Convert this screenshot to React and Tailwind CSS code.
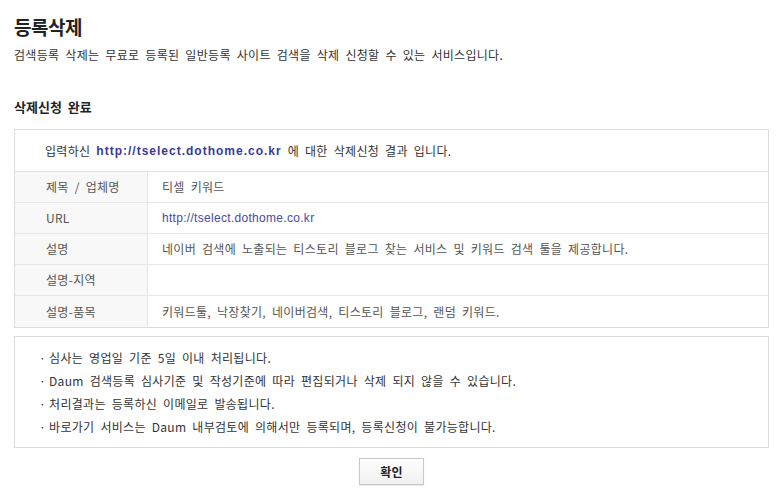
const rows = [
  { label: "제목 / 업체명", value: "티셀 키워드" },
  { label: "URL", value: "http://tselect.dothome.co.kr", link: true },
  { label: "설명", value: "네이버 검색에 노출되는 티스토리 블로그 찾는 서비스 및 키워드 검색 툴을 제공합니다." },
  { label: "설명-지역", value: "" },
  { label: "설명-품목", value: "키워드툴, 낙장찾기, 네이버검색, 티스토리 블로그, 랜덤 키워드." },
];

const notices = [
  "심사는 영업일 기준 5일 이내 처리됩니다.",
  "Daum 검색등록 심사기준 및 작성기준에 따라 편집되거나 삭제 되지 않을 수 있습니다.",
  "처리결과는 등록하신 이메일로 발송됩니다.",
  "바로가기 서비스는 Daum 내부검토에 의해서만 등록되며, 등록신청이 불가능합니다.",
];

export default function App() {
  return (
    <div
      className="min-h-screen bg-white px-[14px] pt-[14px] text-[#333] tracking-[0.3px] [word-spacing:3px]"
      style={{ fontFamily: '"Noto Sans CJK KR", "Noto Sans", sans-serif' }}
    >
      <h1 className="text-[19px] font-bold leading-[26px] tracking-[-0.5px] text-[#222]">등록삭제</h1>
      <p className="mt-[6px] text-[12px] leading-[18px]">
        검색등록 삭제는 무료로 등록된 일반등록 사이트 검색을 삭제 신청할 수 있는 서비스입니다.
      </p>

      <h2 className="mt-[34px] text-[13px] font-bold leading-[18px] tracking-normal text-[#222]">삭제신청 완료</h2>

      <div className="mt-[13px] w-[755px] border border-[#dcdcdc]">
        <div className="flex h-[42px] items-center border-b border-[#e3e3e3] pl-[30px] text-[12px]">
          <span>입력하신&nbsp;</span>
          <span
            className="font-bold tracking-[1px] text-[#3b3a9a]"
            style={{ fontFamily: '"Liberation Sans", Arial, sans-serif' }}
          >
            http://tselect.dothome.co.kr
          </span>
          <span>&nbsp;에 대한 삭제신청 결과 입니다.</span>
        </div>
        {rows.map((r, i) => (
          <div
            key={r.label}
            className={`flex h-[31px] text-[12px] ${i < rows.length - 1 ? "border-b border-[#e6e6e6]" : ""}`}
          >
            <div className="flex w-[133px] items-center border-r border-[#e6e6e6] bg-[#f8f8f8] pl-[31px] text-[#555]">
              {r.label}
            </div>
            <div
              className={`flex items-center pl-[14px] ${r.link ? "text-[#4a4a9e]" : "text-[#555]"}`}
              style={r.link ? { fontFamily: '"Liberation Sans", Arial, sans-serif' } : undefined}
            >
              {r.value}
            </div>
          </div>
        ))}
      </div>

      <div className="mt-[8px] w-[755px] border border-[#dcdcdc] px-[24px] py-[9px] text-[12px] leading-[23px]">
        {notices.map((n) => (
          <p key={n}>
            <span className="mr-[3px]">·</span>
            {n}
          </p>
        ))}
      </div>

      <div className="mt-[10px] flex w-[755px] justify-center">
        <button className="h-[27px] w-[65px] border border-[#c9c9c9] bg-gradient-to-b from-white to-[#f0f0f0] text-[12px] font-bold text-[#222] shadow-[0_1px_1px_rgba(0,0,0,0.08)]">
          확인
        </button>
      </div>
    </div>
  );
}
